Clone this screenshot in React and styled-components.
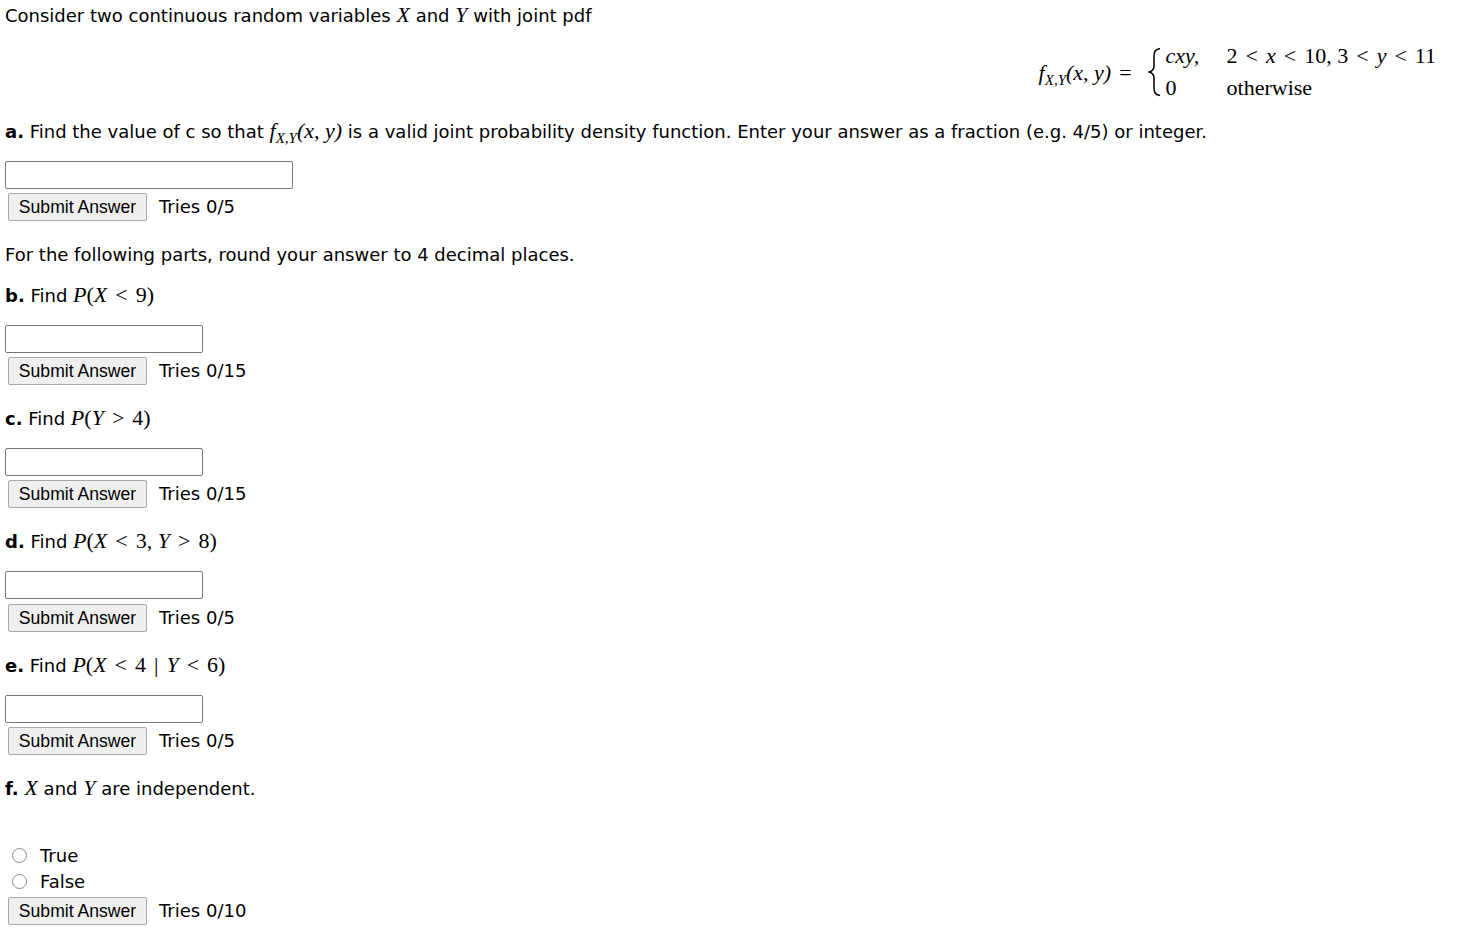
import React from 'react'
import styled, { createGlobalStyle } from 'styled-components'

const GlobalStyle = createGlobalStyle`
  html, body {
    margin: 0;
    padding: 0;
    background: #ffffff;
  }

  body {
    font-family: "DejaVu Sans", Verdana, sans-serif;
    font-size: 18px;
    color: #000000;
  }
`

const Page = styled.div`
  width: 1480px;
  min-height: 938px;
  padding: 5px 5px 0 5px;
  box-sizing: border-box;
`

const Line = styled.div`
  line-height: 20px;
  height: 20px;
  white-space: nowrap;
  margin-top: ${(p) => p.$top || 0}px;
`

const Math = styled.span`
  font-family: "Liberation Serif", "Times New Roman", serif;
  font-size: 22px;
  line-height: 20px;
  font-style: ${(p) => (p.$upright ? 'normal' : 'italic')};
`

const Rel = styled.span`
  font-family: "Liberation Serif", "Times New Roman", serif;
  font-size: 22px;
  line-height: 20px;
  font-style: normal;
  margin: 0 8px;
`

const Sub = styled.sub`
  font-size: 15px;
  font-style: italic;
  vertical-align: -5px;
  line-height: 0;
`

const Letter = styled.b`
  font-weight: 700;
`

const FormulaRow = styled.div`
  display: flex;
  justify-content: flex-end;
  align-items: center;
  padding-right: 39px;
  margin-top: 17px;
  height: 60px;
  font-family: "Liberation Serif", "Times New Roman", serif;
  font-size: 22px;
`

const FormulaLeft = styled.div`
  white-space: nowrap;
  margin-right: 6px;
  padding-top: 2px;
`

const Brace = styled.svg`
  width: 16px;
  height: 50px;
  margin-right: 4px;
`

const Cases = styled.div`
  display: grid;
  grid-template-columns: 61px auto;
  grid-auto-rows: 32px;
  align-items: center;
  white-space: nowrap;
`

const Answer = styled.input`
  display: block;
  width: ${(p) => p.$width || 198}px;
  height: 28px;
  box-sizing: border-box;
  border: 1px solid #767676;
  border-radius: 2px;
  margin-top: 20px;
  padding: 0 4px;
  font-size: 16px;
`

const SubmitRow = styled.div`
  display: flex;
  align-items: center;
  gap: 12px;
  margin-top: ${(p) => p.$top || 4}px;
  padding-left: 3px;
`

const SubmitButton = styled.button`
  height: 28px;
  width: 139px;
  padding: 0;
  box-sizing: border-box;
  background: #efefef;
  border: 1px solid #a8a8a8;
  border-radius: 2px;
  font-family: "Liberation Sans", Arial, sans-serif;
  font-size: 17.6px;
  color: #000000;
`

const Tries = styled.span`
  line-height: 20px;
`

const RadioList = styled.div`
  margin-top: 44px;
  padding-left: 7px;
`

const RadioRow = styled.label`
  display: flex;
  align-items: center;
  gap: 13px;
  height: 26px;
`

const Radio = styled.input`
  appearance: none;
  margin: 0;
  width: 15px;
  height: 15px;
  border: 1px solid #8a8a8a;
  border-radius: 50%;
  background: #ffffff;
`

const SubmitBlock = ({ tries, top }) => (
  <SubmitRow $top={top}>
    <SubmitButton>Submit Answer</SubmitButton>
    <Tries>Tries {tries}</Tries>
  </SubmitRow>
)

const Fxy = () => (
  <Math>
    f<Sub>X,Y</Sub>(x, y)
  </Math>
)

const App = () => {
  return (
    <Page>
      <GlobalStyle />
      <Line>
        Consider two continuous random variables <Math>X</Math> and <Math>Y</Math> with joint pdf
      </Line>

      <FormulaRow>
        <FormulaLeft>
          <Fxy />
          <Rel>=</Rel>
        </FormulaLeft>
        <Brace viewBox="0 0 16 50">
          <path
            d="M14 1.5 C8.5 2.5 8 5 8 10 L8 19 C8 23 6 24.5 2.5 25 C6 25.5 8 27 8 31 L8 40 C8 45 8.5 47.5 14 48.5"
            fill="none"
            stroke="#000"
            strokeWidth="1.5"
          />
        </Brace>
        <Cases>
          <Math>cxy,</Math>
          <Math $upright>
            2<Rel>&lt;</Rel><Math>x</Math><Rel>&lt;</Rel>10, 3<Rel>&lt;</Rel><Math>y</Math><Rel>&lt;</Rel>11
          </Math>
          <Math $upright>0</Math>
          <Math $upright>otherwise</Math>
        </Cases>
      </FormulaRow>

      <Line $top={19}>
        <Letter>a.</Letter> Find the value of c so that <Fxy /> is a valid joint probability density function. Enter your answer as a fraction (e.g. 4/5) or integer.
      </Line>
      <Answer $width={288} />
      <SubmitBlock tries="0/5" />

      <Line $top={24}>For the following parts, round your answer to 4 decimal places.</Line>

      <Line $top={20}>
        <Letter>b.</Letter> Find <Math>P</Math><Math $upright>(</Math><Math>X</Math><Rel>&lt;</Rel><Math $upright>9)</Math>
      </Line>
      <Answer />
      <SubmitBlock tries="0/15" />

      <Line $top={23}>
        <Letter>c.</Letter> Find <Math>P</Math><Math $upright>(</Math><Math>Y</Math><Rel>&gt;</Rel><Math $upright>4)</Math>
      </Line>
      <Answer />
      <SubmitBlock tries="0/15" />

      <Line $top={23}>
        <Letter>d.</Letter> Find <Math>P</Math><Math $upright>(</Math><Math>X</Math><Rel>&lt;</Rel><Math $upright>3, </Math><Math>Y</Math><Rel>&gt;</Rel><Math $upright>8)</Math>
      </Line>
      <Answer />
      <SubmitBlock tries="0/5" top={5} />

      <Line $top={23}>
        <Letter>e.</Letter> Find <Math>P</Math><Math $upright>(</Math><Math>X</Math><Rel>&lt;</Rel><Math $upright>4</Math><Rel>|</Rel><Math>Y</Math><Rel>&lt;</Rel><Math $upright>6)</Math>
      </Line>
      <Answer />
      <SubmitBlock tries="0/5" />

      <Line $top={23}>
        <Letter>f.</Letter> <Math>X</Math> and <Math>Y</Math> are independent.
      </Line>

      <RadioList>
        <RadioRow>
          <Radio type="radio" name="indep" />
          True
        </RadioRow>
        <RadioRow>
          <Radio type="radio" name="indep" />
          False
        </RadioRow>
      </RadioList>
      <SubmitBlock tries="0/10" top={3} />
    </Page>
  )
}

export default App
